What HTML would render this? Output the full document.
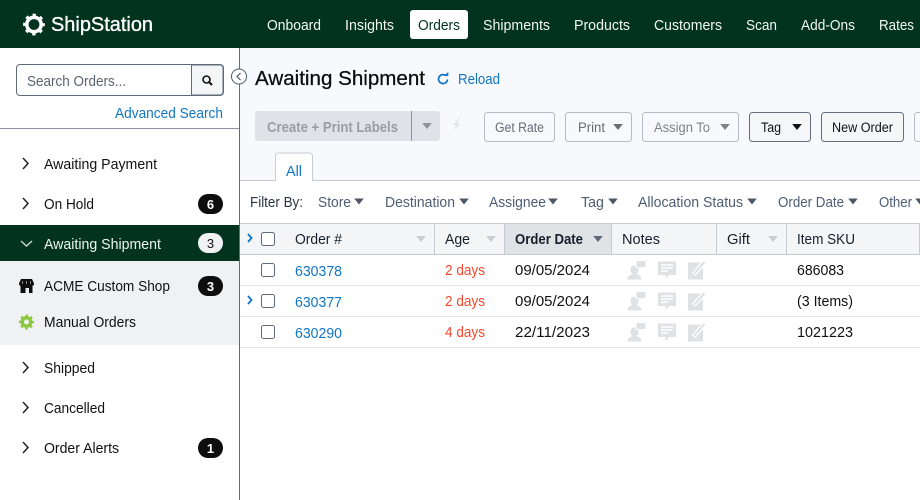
<!DOCTYPE html>
<html><head><meta charset="utf-8"><title>ShipStation</title>
<style>
html,body{margin:0;padding:0;width:920px;height:500px;overflow:hidden;background:#fff}
svg{display:block}
text{font-family:"Liberation Sans",sans-serif;font-size:14.5px;fill:#111;}
.nav{fill:#f2f7f4}
.blue{fill:#1076c4}
.red{fill:#f4472b}
.f{fill:#4d5e73}
.h{font-size:14.5px;fill:#16202c}
</style></head><body>
<svg width="920" height="500" viewBox="0 0 920 500" xmlns="http://www.w3.org/2000/svg">
<defs>
<path id="car" d="M-4.800-3H4.800L0 3Z"/>
<g id="person"><path d="M-9.500 9.500c0-3.500 2.500-4.500 5-5.500c-1.800-1.500-2.500-3.500-2-5.500c.5-2 2-3 4-3s3.500 1 4 3c.5 2-.2 4-2 5.500c2.500 1 5 2 5 5.500z"/><path d="M-1-9.500H9V-2.500H4.500L2-.3V-2.500H-1z" stroke="#fff" stroke-width="1"/></g>
<g id="comment"><path d="M-9-8.500H9V5H2L-1.500 9V5H-9z"/><path d="M-6-5H6M-6-2H6M-6 1H1" stroke="#fff" stroke-width="1.400"/></g>
<g id="edit"><rect x="-9" y="-7.500" width="15" height="17"/><path d="M-3.500 4.500L7-7.500" stroke="#fff" stroke-width="4.600"/><path d="M-3 3.800L7.500-8" stroke="#dfe2e5" stroke-width="2.200"/></g>
<rect id="cb" width="13" height="13" rx="2" fill="#fff" stroke="#5f6b7a" stroke-width="1"/>
</defs>

<!-- page backgrounds -->
<rect x="240" y="48" width="680" height="133" fill="#f8f9fc"/>
<rect x="0" y="0" width="920" height="48" fill="#01331f"/>

<!-- logo -->
<circle cx="34" cy="24.500" r="7.200" fill="none" stroke="#fff" stroke-width="3.600"/>
<circle cx="34" cy="24.500" r="9.800" fill="none" stroke="#fff" stroke-width="2.200" stroke-dasharray="3.400 4.297" stroke-dashoffset="1.700"/>
<text x="51" y="31" textLength="102" lengthAdjust="spacingAndGlyphs" style="font-size:20.500px;fill:#fff;stroke:#fff;stroke-width:.35">ShipStation</text>

<!-- nav -->
<rect x="410" y="10" width="58" height="29" rx="3" fill="#fff"/>
<text class="nav" x="267" y="30" textLength="54" lengthAdjust="spacingAndGlyphs">Onboard</text>
<text class="nav" x="345" y="30" textLength="49" lengthAdjust="spacingAndGlyphs">Insights</text>
<text x="418" y="30" textLength="42" lengthAdjust="spacingAndGlyphs" style="fill:#01331f">Orders</text>
<text class="nav" x="483" y="30" textLength="67" lengthAdjust="spacingAndGlyphs">Shipments</text>
<text class="nav" x="574" y="30" textLength="56" lengthAdjust="spacingAndGlyphs">Products</text>
<text class="nav" x="654" y="30" textLength="68" lengthAdjust="spacingAndGlyphs">Customers</text>
<text class="nav" x="746" y="30" textLength="31" lengthAdjust="spacingAndGlyphs">Scan</text>
<text class="nav" x="801" y="30" textLength="54" lengthAdjust="spacingAndGlyphs">Add-Ons</text>
<text class="nav" x="879" y="30" textLength="35" lengthAdjust="spacingAndGlyphs">Rates</text>

<!-- sidebar -->
<rect x="16.500" y="64.500" width="207" height="31" rx="3.500" fill="#fff" stroke="#5f6b7a"/>
<path d="M191.500 65H220a3 3 0 0 1 3 3V92a3 3 0 0 1-3 3H191.500z" fill="#f3f5f7" stroke="#5f6b7a"/>
<circle cx="206.500" cy="79.500" r="3.500" fill="none" stroke="#111" stroke-width="1.600"/>
<path d="M209 82l3 3" stroke="#111" stroke-width="2"/>
<text x="27" y="86" textLength="99" lengthAdjust="spacingAndGlyphs" style="fill:#5a6472">Search Orders...</text>
<text class="blue" x="115" y="118" textLength="108" lengthAdjust="spacingAndGlyphs">Advanced Search</text>
<rect x="0" y="128" width="239" height="1" fill="#8a94a0"/>

<path d="M23 158l5 5.500-5 5.500" fill="none" stroke="#222" stroke-width="1.500"/>
<text x="44" y="169" textLength="113" lengthAdjust="spacingAndGlyphs">Awaiting Payment</text>
<path d="M23 198l5 5.500-5 5.500" fill="none" stroke="#222" stroke-width="1.500"/>
<text x="44" y="209" textLength="50" lengthAdjust="spacingAndGlyphs">On Hold</text>
<rect x="198" y="194" width="25" height="20" rx="10" fill="#0e0e0e"/>
<text x="210.500" y="209" text-anchor="middle" style="fill:#fff;font-size:13px;font-weight:bold">6</text>

<rect x="0" y="225" width="239" height="36" fill="#01331f"/>
<path d="M21 241l5.500 5 5.500-5" fill="none" stroke="#c9d4ce" stroke-width="1.500"/>
<text x="44" y="249" textLength="117" lengthAdjust="spacingAndGlyphs" style="fill:#eef5f1">Awaiting Shipment</text>
<rect x="198" y="233" width="25" height="20" rx="10" fill="#f0f1f3"/>
<text x="210.500" y="248" text-anchor="middle" style="fill:#111;font-size:13px">3</text>

<rect x="0" y="261" width="239" height="84" fill="#f0f1f3"/>
<path d="M21 279h11l2 4.500a2.200 2.200 0 0 1-1.500 2.300V293H29v-5h-3.500v5H20.500V285.800A2.200 2.200 0 0 1 19 283.500z" fill="#0e0e0e"/>
<path d="M22.500 281v3M26.500 281v3M30.500 281v3" stroke="#8a8a8a" stroke-width="1"/>
<text x="44" y="291" textLength="126" lengthAdjust="spacingAndGlyphs">ACME Custom Shop</text>
<rect x="198" y="276" width="25" height="20" rx="10" fill="#0e0e0e"/>
<text x="210.500" y="291" text-anchor="middle" style="fill:#fff;font-size:13px;font-weight:bold">3</text>
<circle cx="26.500" cy="322" r="4.200" fill="none" stroke="#8dc63f" stroke-width="3.400"/>
<circle cx="26.500" cy="322" r="6.500" fill="none" stroke="#8dc63f" stroke-width="2" stroke-dasharray="2.600 2.505" stroke-dashoffset="1.300"/>
<text x="44" y="327" textLength="92" lengthAdjust="spacingAndGlyphs">Manual Orders</text>

<path d="M23 362l5 5.500-5 5.500" fill="none" stroke="#222" stroke-width="1.500"/>
<text x="44" y="373" textLength="51" lengthAdjust="spacingAndGlyphs">Shipped</text>
<path d="M23 402l5 5.500-5 5.500" fill="none" stroke="#222" stroke-width="1.500"/>
<text x="44" y="413" textLength="61" lengthAdjust="spacingAndGlyphs">Cancelled</text>
<path d="M23 442l5 5.500-5 5.500" fill="none" stroke="#222" stroke-width="1.500"/>
<text x="44" y="453" textLength="75" lengthAdjust="spacingAndGlyphs">Order Alerts</text>
<rect x="198" y="438" width="25" height="20" rx="10" fill="#0e0e0e"/>
<text x="210.500" y="453" text-anchor="middle" style="fill:#fff;font-size:13px;font-weight:bold">1</text>

<rect x="239" y="48" width="1" height="452" fill="#5f6b7a"/>
<circle cx="239" cy="76.500" r="7.500" fill="#fff" stroke="#4d5866"/>
<path d="M240.500 73l-3.500 3.500 3.500 3.500" fill="none" stroke="#4d5866" stroke-width="1.200"/>

<!-- title -->
<text x="255" y="85" textLength="170" lengthAdjust="spacingAndGlyphs" style="font-size:20.500px;fill:#0c0c0c;stroke:#0c0c0c;stroke-width:.25">Awaiting Shipment</text>
<path d="M447.500 79.500a4.500 4.500 0 1 1-1.500-3.800" fill="none" stroke="#1076c4" stroke-width="1.700"/>
<path d="M443.500 74.500h4.800v-4z" transform="translate(0 1.500)" fill="#1076c4"/>
<text class="blue" x="458" y="84" textLength="42" lengthAdjust="spacingAndGlyphs">Reload</text>

<!-- toolbar -->
<rect x="255" y="111" width="185" height="30" rx="3" fill="#dfe2e6"/>
<rect x="411" y="111" width="1" height="30" fill="#8e949b"/>
<text x="267" y="132" textLength="131" lengthAdjust="spacingAndGlyphs" style="font-weight:bold;fill:#9a9ea4">Create + Print Labels</text>
<use href="#car" x="427" y="126" fill="#8e949b"/>
<path d="M459 118l-6 7h3l-2.500 5.500 7-7h-3.500l3-5.500z" fill="#e2e5e8"/>

<g fill="#f8f9fc" stroke="#b5bcc5">
<rect x="484.500" y="112.500" width="70" height="29" rx="3"/>
<rect x="565.500" y="112.500" width="66" height="29" rx="3"/>
<rect x="642.500" y="112.500" width="96" height="29" rx="3"/>
</g>
<g fill="#f5f6f8" stroke="#66717f">
<rect x="749.500" y="112.500" width="61" height="29" rx="3"/>
<rect x="821.500" y="112.500" width="82" height="29" rx="3"/>
</g>
<rect x="914.500" y="112.500" width="20" height="29" rx="3" fill="#f8f9fc" stroke="#b5bcc5"/>
<text x="495" y="132" textLength="49" lengthAdjust="spacingAndGlyphs" style="font-size:13.500px;fill:#666d75">Get Rate</text>
<text x="578" y="132" textLength="27" lengthAdjust="spacingAndGlyphs" style="font-size:13.500px;fill:#666d75">Print</text>
<use href="#car" x="618" y="127" fill="#666d75"/>
<text x="654" y="132" textLength="56" lengthAdjust="spacingAndGlyphs" style="font-size:13.500px;fill:#7d838a">Assign To</text>
<use href="#car" x="725" y="127" fill="#7d838a"/>
<text x="761" y="132" textLength="20" lengthAdjust="spacingAndGlyphs" style="font-size:13.500px">Tag</text>
<use href="#car" x="797" y="127" fill="#111"/>
<text x="832" y="132" textLength="61" lengthAdjust="spacingAndGlyphs" style="font-size:13.500px">New Order</text>

<!-- tab -->
<rect x="240" y="180" width="680" height="1" fill="#c5ccd4"/>
<path d="M275.500 181V156a3 3 0 0 1 3-3H309.500a3 3 0 0 1 3 3V181" fill="#fff" stroke="#c5ccd4"/>
<text class="blue" x="286" y="176" textLength="16" lengthAdjust="spacingAndGlyphs">All</text>

<!-- filter bar -->
<text x="250" y="207" textLength="53" lengthAdjust="spacingAndGlyphs" style="fill:#2a3644">Filter By:</text>
<text class="f" x="318" y="207" textLength="33" lengthAdjust="spacingAndGlyphs">Store</text><use href="#car" x="359" y="201.500" fill="#4d5866"/>
<text class="f" x="385" y="207" textLength="70" lengthAdjust="spacingAndGlyphs">Destination</text><use href="#car" x="464" y="201.500" fill="#4d5866"/>
<text class="f" x="489" y="207" textLength="57" lengthAdjust="spacingAndGlyphs">Assignee</text><use href="#car" x="553" y="201.500" fill="#4d5866"/>
<text class="f" x="581" y="207" textLength="23" lengthAdjust="spacingAndGlyphs">Tag</text><use href="#car" x="613" y="201.500" fill="#4d5866"/>
<text class="f" x="638" y="207" textLength="105" lengthAdjust="spacingAndGlyphs">Allocation Status</text><use href="#car" x="752" y="201.500" fill="#4d5866"/>
<text class="f" x="778" y="207" textLength="66" lengthAdjust="spacingAndGlyphs">Order Date</text><use href="#car" x="853" y="201.500" fill="#4d5866"/>
<text class="f" x="879" y="207" textLength="33" lengthAdjust="spacingAndGlyphs">Other</text><use href="#car" x="920" y="201.500" fill="#4d5866"/>

<!-- table head -->
<rect x="240" y="223" width="680" height="32" fill="#f3f5f7"/>
<rect x="505" y="224" width="106" height="30" fill="#dfe3e6"/>
<rect x="240" y="223" width="680" height="1" fill="#c5ccd4"/>
<rect x="240" y="254" width="680" height="1" fill="#c5ccd4"/>
<g fill="#c5ccd4">
<rect x="434" y="224" width="1" height="30"/><rect x="504" y="224" width="1" height="30"/>
<rect x="611" y="224" width="1" height="30"/><rect x="716" y="224" width="1" height="30"/>
<rect x="786" y="224" width="1" height="30"/><rect x="919" y="224" width="1" height="30"/>
</g>
<path d="M248 234l3.500 4-3.500 4" fill="none" stroke="#1076c4" stroke-width="1.800"/>
<use href="#cb" x="261.500" y="232.500"/>
<text class="h" x="295" y="244" textLength="47" lengthAdjust="spacingAndGlyphs">Order #</text>
<use href="#car" x="421" y="239" fill="#c9ced4"/>
<text class="h" x="445" y="244" textLength="25" lengthAdjust="spacingAndGlyphs">Age</text>
<use href="#car" x="491" y="239" fill="#c9ced4"/>
<text class="h" x="515" y="244" textLength="68" lengthAdjust="spacingAndGlyphs" style="font-weight:bold">Order Date</text>
<use href="#car" x="598" y="239" fill="#5f6b7a"/>
<text class="h" x="622" y="244" textLength="38" lengthAdjust="spacingAndGlyphs">Notes</text>
<text class="h" x="727" y="244" textLength="23" lengthAdjust="spacingAndGlyphs">Gift</text>
<use href="#car" x="773" y="239" fill="#c9ced4"/>
<text class="h" x="797" y="244" textLength="58" lengthAdjust="spacingAndGlyphs">Item SKU</text>

<!-- rows -->
<g fill="#e3e5e8">
<rect x="240" y="285" width="680" height="1"/><rect x="240" y="316" width="680" height="1"/><rect x="240" y="347" width="680" height="1"/>
</g>
<use href="#cb" x="261.500" y="263.500"/><use href="#cb" x="261.500" y="294.500"/><use href="#cb" x="261.500" y="325.500"/>
<path d="M248 296l3.500 4-3.500 4" fill="none" stroke="#1076c4" stroke-width="1.800"/>

<text class="blue" x="295" y="276" textLength="47" lengthAdjust="spacingAndGlyphs">630378</text>
<text class="red" x="445" y="275" textLength="40" lengthAdjust="spacingAndGlyphs">2 days</text>
<text x="515" y="275" textLength="75" lengthAdjust="spacingAndGlyphs">09/05/2024</text>
<text x="797" y="275" textLength="47" lengthAdjust="spacingAndGlyphs">686083</text>

<text class="blue" x="295" y="307" textLength="47" lengthAdjust="spacingAndGlyphs">630377</text>
<text class="red" x="445" y="306" textLength="40" lengthAdjust="spacingAndGlyphs">2 days</text>
<text x="515" y="306" textLength="75" lengthAdjust="spacingAndGlyphs">09/05/2024</text>
<text x="797" y="306" textLength="56" lengthAdjust="spacingAndGlyphs">(3 Items)</text>

<text class="blue" x="295" y="338" textLength="47" lengthAdjust="spacingAndGlyphs">630290</text>
<text class="red" x="445" y="337" textLength="40" lengthAdjust="spacingAndGlyphs">4 days</text>
<text x="515" y="337" textLength="75" lengthAdjust="spacingAndGlyphs">22/11/2023</text>
<text x="797" y="337" textLength="56" lengthAdjust="spacingAndGlyphs">1021223</text>

<g fill="#dfe2e5">
<use href="#person" x="637" y="270"/><use href="#comment" x="667" y="270"/><use href="#edit" x="697" y="270"/>
<use href="#person" x="637" y="301"/><use href="#comment" x="667" y="301"/><use href="#edit" x="697" y="301"/>
<use href="#person" x="637" y="332"/><use href="#comment" x="667" y="332"/><use href="#edit" x="697" y="332"/>
</g>
</svg>
</body></html>
